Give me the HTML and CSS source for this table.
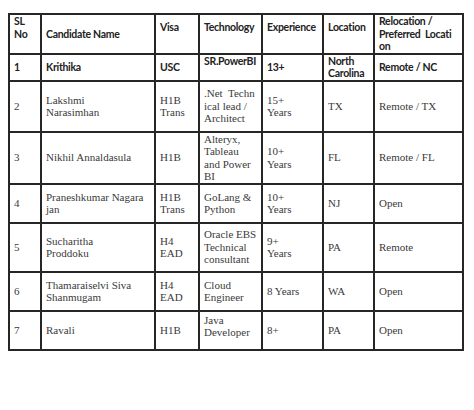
FILE: index.html
```html
<!DOCTYPE html>
<html>
<head>
<meta charset="utf-8">
<link rel="stylesheet" href="styles.css">
</head>
<body>
<table class="grid">
  <colgroup>
    <col class="c-sl"><col class="c-name"><col class="c-visa"><col class="c-tech"><col class="c-exp"><col class="c-loc"><col class="c-rel">
  </colgroup>
  <tr class="head">
    <td class="top">SL<br>No</td>
    <td>Candidate Name</td>
    <td class="raised">Visa</td>
    <td class="raised">Technology</td>
    <td class="raised">Experience</td>
    <td class="raised">Location</td>
    <td class="top">Relocation /<br>Preferred&nbsp; Locati<br>on</td>
  </tr>
  <tr class="bold r-1">
    <td>1</td>
    <td>Krithika</td>
    <td>USC</td>
    <td class="top">SR.PowerBI</td>
    <td>13+</td>
    <td>North<br>Carolina</td>
    <td>Remote / NC</td>
  </tr>
  <tr class="r-tall">
    <td>2</td>
    <td>Lakshmi<br>Narasimhan</td>
    <td>H1B<br>Trans</td>
    <td>.Net&nbsp; Techn<br>ical lead /<br>Architect</td>
    <td>15+<br>Years</td>
    <td>TX</td>
    <td>Remote / TX</td>
  </tr>
  <tr class="r-tall">
    <td>3</td>
    <td>Nikhil Annaldasula</td>
    <td>H1B</td>
    <td>Alteryx,<br>Tableau<br>and Power<br>BI</td>
    <td>10+<br>Years</td>
    <td>FL</td>
    <td>Remote / FL</td>
  </tr>
  <tr class="r-mid">
    <td>4</td>
    <td>Praneshkumar Nagara<br>jan</td>
    <td>H1B<br>Trans</td>
    <td>GoLang &amp;<br>Python</td>
    <td>10+<br>Years</td>
    <td>NJ</td>
    <td>Open</td>
  </tr>
  <tr class="r-tall2">
    <td>5</td>
    <td>Sucharitha<br>Proddoku</td>
    <td>H4<br>EAD</td>
    <td>Oracle EBS<br>Technical<br>consultant</td>
    <td>9+<br>Years</td>
    <td>PA</td>
    <td>Remote</td>
  </tr>
  <tr class="r-mid">
    <td>6</td>
    <td>Thamaraiselvi Siva<br>Shanmugam</td>
    <td>H4<br>EAD</td>
    <td>Cloud<br>Engineer</td>
    <td>8 Years</td>
    <td>WA</td>
    <td>Open</td>
  </tr>
  <tr class="r-mid">
    <td>7</td>
    <td>Ravali</td>
    <td>H1B</td>
    <td class="up">Java<br>Developer</td>
    <td>8+</td>
    <td>PA</td>
    <td>Open</td>
  </tr>
</table>
</body>
</html>
```
FILE: styles.css
```css
html, body {
  margin: 0;
  padding: 0;
  background: #ffffff;
}
body {
  padding: 13px 0 0 8px;
}
.grid {
  border-collapse: collapse;
  table-layout: fixed;
  width: 454px;
  font-family: "Liberation Serif", "DejaVu Serif", serif;
  font-size: 11px;
  line-height: 12.5px;
  color: #3a3a3a;
}
.grid td {
  border: 2px solid #262626;
  padding: 0 4px;
  vertical-align: middle;
  text-align: left;
  white-space: nowrap;
  overflow: hidden;
}
.c-sl { width: 32px; }
.c-name { width: 114px; }
.c-visa { width: 44px; }
.c-tech { width: 63px; }
.c-exp { width: 61px; }
.c-loc { width: 51px; }
.c-rel { width: 89px; }

.head td, .bold td {
  font-family: Lato, "Liberation Sans", Arial, sans-serif;
  font-weight: bold;
  font-size: 10.5px;
  letter-spacing: -0.3px;
  color: #222222;
}
.head { height: 39px; }
.r-1 { height: 27px; }
.r-tall { height: 51px; }
.r-tall2 { height: 49px; }
.r-mid { height: 39px; }
.grid td.top { vertical-align: top; padding-top: 0; }
.grid td.raised { vertical-align: top; padding-top: 6px; }
.grid td.up { vertical-align: top; padding-top: 2px; }
```
